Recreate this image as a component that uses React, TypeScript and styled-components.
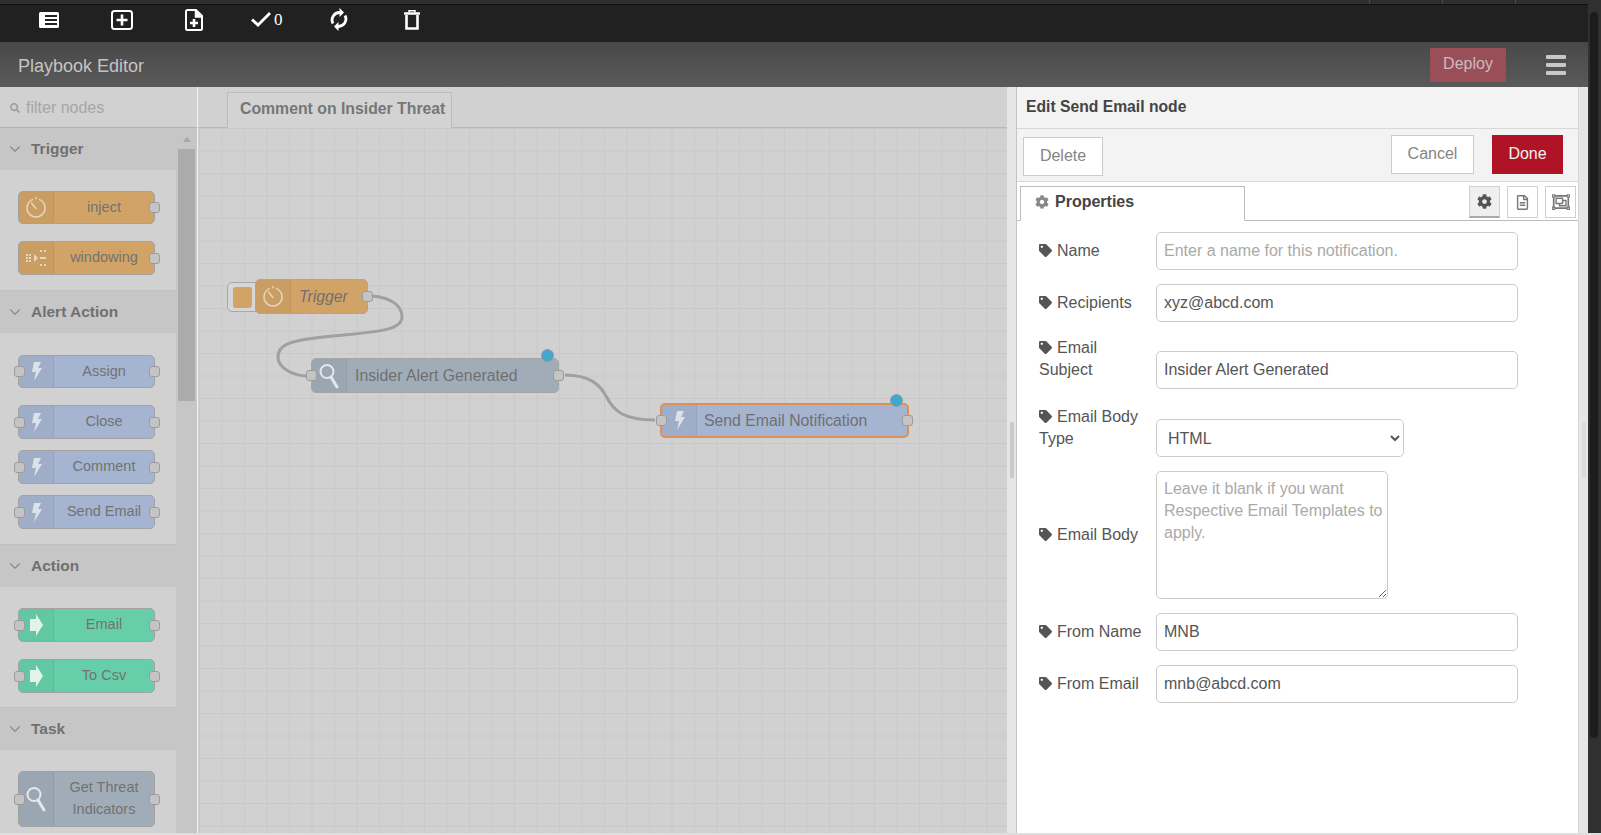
import { ReactNode } from 'react';
import styled, { createGlobalStyle } from 'styled-components';
import { ChevronDown } from 'lucide-react';
import { FaCog, FaRegFileAlt, FaRegObjectGroup, FaSearch, FaTag } from 'react-icons/fa';

const GlobalStyle = createGlobalStyle`
  html, body {
    margin: 0;
    padding: 0;
    overflow: hidden;
    font-family: "Liberation Sans", Arial, sans-serif;
    background: #dedede;
  }
  * { box-sizing: border-box; }
`;

const Page = styled.div`
  display: flex;
  width: 1601px;
  height: 835px;
`;

const Main = styled.div`
  display: flex;
  flex-direction: column;
  width: 1588px;
  height: 833px;
`;

const PageScroll = styled.div`
  width: 13px;
  height: 833px;
  background: #303030;
  padding: 12px 3px 0 2px;
`;

const PageThumb = styled.div`
  height: 726px;
  background: #1c1c1c;
  border-radius: 4px;
`;

const TopStrip = styled.div`
  display: flex;
  justify-content: flex-end;
  height: 5px;
  background: #2e2e2e;
  border-bottom: 1px solid #111;
`;

const StripTab = styled.div`
  width: 73px;
  border-left: 1px solid #4a4a4a;
`;

const ToolBar = styled.div`
  display: flex;
  align-items: center;
  height: 37px;
  padding: 0 0 8px 13px;
  background: #212121;
  color: #fff;
`;

const ToolButton = styled.div`
  display: flex;
  align-items: center;
  justify-content: center;
  gap: 3px;
  width: 72.5px;
`;

const CheckCount = styled.span`
  font-family: "Liberation Serif", serif;
  font-size: 17px;
`;

const Header = styled.div`
  display: flex;
  align-items: center;
  height: 45px;
  padding: 0 22px 0 18px;
  background: linear-gradient(#484848, #5a5a5a);
`;

const Title = styled.div`
  flex: 1;
  padding-top: 3px;
  font-size: 18px;
  color: #c4c4c4;
`;

const Deploy = styled.div`
  display: flex;
  align-items: center;
  justify-content: center;
  width: 76px;
  height: 34px;
  margin-right: 40px;
  padding-bottom: 2px;
  font-size: 16px;
  color: #c9bcbc;
  background: #9a4f58;
`;

const Burger = styled.div`
  display: flex;
  flex-direction: column;
  gap: 4px;
  width: 20px;
`;

const BurgerLine = styled.div`
  height: 4px;
  border-radius: 1px;
  background: #c8c8c8;
`;

const Workspace = styled.div`
  display: flex;
  flex: 1;
  min-height: 0;
`;

const Sidebar = styled.div`
  display: flex;
  flex: none;
  flex-direction: column;
  width: 198px;
  background: #c6c6c6;
  border-right: 1px solid #f2f2f2;
  overflow: hidden;
`;

const Filter = styled.div`
  display: flex;
  align-items: center;
  gap: 6px;
  flex: none;
  height: 41px;
  padding: 2px 0 0 10px;
  font-size: 16px;
  color: #a6a6a6;
  background: #d1d1d1;
  border-bottom: 1px solid #b3b3b3;
`;

const PaletteRow = styled.div`
  display: flex;
  flex: 1;
  min-height: 0;
`;

const Palette = styled.div`
  width: 176px;
`;

const Category = styled.div`
  display: flex;
  align-items: center;
  gap: 7px;
  height: 42px;
  padding: 0 0 1px 6px;
  font-size: 15.5px;
  font-weight: 700;
  color: #707070;
  background: #c6c6c6;
`;

const CategoryBody = styled.div<{ $bottom: number }>`
  display: flow-root;
  padding-bottom: ${(p) => p.$bottom}px;
  background: #d1d1d1;
  border-bottom: 1px solid #c0c0c0;
`;

const PaletteTrack = styled.div`
  display: flex;
  flex-direction: column;
  align-items: center;
  width: 19px;
  padding: 9px 0 0 2px;
`;

const UpArrow = styled.div`
  width: 0;
  height: 0;
  margin-bottom: 7px;
  border-left: 4.5px solid transparent;
  border-right: 4.5px solid transparent;
  border-bottom: 5px solid #a6a6a6;
`;

const PaletteThumb = styled.div`
  width: 17px;
  height: 252px;
  background: #ababab;
`;

const PaletteNode = styled.div<{ $bg: string; $h: number; $gap: number }>`
  position: relative;
  display: flex;
  width: 137px;
  height: ${(p) => p.$h}px;
  margin: ${(p) => p.$gap}px 0 0 18px;
  background: ${(p) => p.$bg};
  border: 1px solid #a2a2a2;
  border-radius: 5px;
`;

const NodeIcon = styled.div`
  display: flex;
  flex: none;
  align-items: center;
  justify-content: center;
  width: 35px;
  background: rgba(0, 0, 0, 0.035);
  border-right: 1px solid rgba(0, 0, 0, 0.06);
  border-radius: 4px 0 0 4px;
`;

const PaletteLabel = styled.div`
  flex: 1;
  align-self: center;
  padding: 0 4px 2px;
  font-size: 14.5px;
  line-height: 22px;
  text-align: center;
  color: #727272;
`;

const Port = styled.div<{ $side: 'left' | 'right'; $off?: number }>`
  position: absolute;
  top: 50%;
  ${(p) => p.$side}: ${(p) => p.$off ?? -6}px;
  width: 11px;
  height: 11px;
  margin-top: -5.5px;
  background: #c4c4c4;
  border: 1px solid #9c9c9c;
  border-radius: 3px;
`;

const Canvas = styled.div`
  display: flex;
  flex-direction: column;
  flex: 1;
  min-width: 0;
  background: #d1d1d1;
`;

const TabBar = styled.div`
  flex: none;
  height: 41px;
  padding: 5px 0 0 29px;
  border-bottom: 1px solid #b8b8b8;
`;

const FlowTab = styled.div`
  display: flex;
  align-items: center;
  width: 225px;
  height: 36px;
  padding: 0 0 3px 12px;
  font-size: 15.8px;
  font-weight: 700;
  color: #767676;
  white-space: nowrap;
  background: #d3d3d3;
  border: 1px solid #bcbcbc;
  border-bottom: none;
`;

const Grid = styled.div`
  position: relative;
  flex: 1;
  overflow: hidden;
  background-image: linear-gradient(to right, #c9c9c9 1px, transparent 1px),
    linear-gradient(to bottom, #c9c9c9 1px, transparent 1px);
  background-size: 22.5px 22.5px;
  background-position: 1px 0;
`;

const Wires = styled.svg`
  position: absolute;
  left: 0;
  top: 0;
  width: 100%;
  height: 100%;
`;

const FlowNode = styled.div<{ $x: number; $y: number; $w: number; $bg: string; $selected?: boolean }>`
  position: absolute;
  left: ${(p) => p.$x - 198}px;
  top: ${(p) => p.$y - 128}px;
  display: flex;
  width: ${(p) => p.$w}px;
  height: 35px;
  background: ${(p) => p.$bg};
  border: ${(p) => (p.$selected ? '2px solid #dd9155' : '1px solid #a6a6a6')};
  border-radius: 5px;
`;

const FlowLabel = styled.div<{ $italic?: boolean; $pad: number }>`
  flex: 1;
  align-self: center;
  padding-left: ${(p) => p.$pad}px;
  font-size: 15.8px;
  font-style: ${(p) => (p.$italic ? 'italic' : 'normal')};
  color: #707070;
  white-space: nowrap;
`;

const InjectButton = styled.div`
  position: absolute;
  left: 29px;
  top: 154px;
  display: flex;
  align-items: center;
  width: 34px;
  height: 30px;
  padding-left: 5px;
  background: #d6d6d6;
  border: 1px solid #a8a8a8;
  border-radius: 5px;
`;

const InjectFace = styled.div`
  width: 19px;
  height: 21px;
  background: #d2a366;
  border-radius: 3px;
`;

const Badge = styled.div<{ $x: number; $y: number }>`
  position: absolute;
  left: ${(p) => p.$x - 198}px;
  top: ${(p) => p.$y - 128}px;
  width: 13px;
  height: 13px;
  background: #3fa9cf;
  border: 1px solid #8f9ca3;
  border-radius: 50%;
`;

const Gutter = styled.div`
  display: flex;
  flex: none;
  align-items: center;
  justify-content: center;
  width: 9px;
  background: #e6e6e6;
`;

const Grip = styled.div<{ $tone: string }>`
  width: 4px;
  height: 56px;
  margin-bottom: 20px;
  background: ${(p) => p.$tone};
`;

const Editor = styled.div`
  display: flex;
  flex: none;
  flex-direction: column;
  width: 563px;
  background: #fff;
  border-left: 1px solid #c4c4c4;
  border-right: 1px solid #d8d8d8;
`;

const EditorTitle = styled.div`
  display: flex;
  align-items: center;
  flex: none;
  height: 42px;
  padding: 0 0 2px 9px;
  font-size: 15.7px;
  font-weight: 700;
  color: #444;
  background: #f3f3f3;
  border-bottom: 1px solid #d8d8d8;
`;

const EditorActions = styled.div`
  display: flex;
  align-items: flex-start;
  flex: none;
  gap: 18px;
  height: 53px;
  padding: 6px 15px 0 6px;
  background: #f3f3f3;
  border-bottom: 1px solid #d8d8d8;
`;

const ActionButton = styled.div<{ $primary?: boolean; $w: number; $push?: boolean; $drop?: number }>`
  display: flex;
  align-items: center;
  justify-content: center;
  width: ${(p) => p.$w}px;
  height: 39px;
  margin-top: ${(p) => p.$drop || 0}px;
  margin-left: ${(p) => (p.$push ? 'auto' : '0')};
  padding-bottom: 2px;
  font-size: 16px;
  color: ${(p) => (p.$primary ? '#f2f2f2' : '#858585')};
  background: ${(p) => (p.$primary ? '#ae1426' : '#fff')};
  border: 1px solid ${(p) => (p.$primary ? '#ae1426' : '#ccc')};
`;

const TabRow = styled.div`
  display: flex;
  flex: none;
  align-items: flex-start;
  gap: 7px;
  height: 39px;
  padding: 4px 2px 0 3px;
  border-bottom: 1px solid #bcbcbc;
`;

const PropsTab = styled.div`
  display: flex;
  align-items: center;
  gap: 6px;
  width: 225px;
  height: 35px;
  margin-right: auto;
  padding: 0 0 4px 14px;
  font-size: 16px;
  font-weight: 700;
  color: #444;
  background: #fff;
  border: 1px solid #bcbcbc;
  border-bottom: 1px solid #fff;
`;

const TabIcon = styled.div<{ $active?: boolean }>`
  display: flex;
  align-items: center;
  justify-content: center;
  width: 31px;
  height: 32px;
  color: ${(p) => (p.$active ? '#555' : '#777')};
  background: ${(p) => (p.$active ? '#efefef' : '#fff')};
  border: 1px solid #d0d0d0;
  border-bottom: ${(p) => (p.$active ? '2px solid #aaa' : '1px solid #d0d0d0')};
`;

const Form = styled.div`
  display: flex;
  flex-direction: column;
  gap: 13.5px;
  padding: 11px 0 0 22px;
`;

const Row = styled.div<{ $center?: boolean; $extra?: number }>`
  display: flex;
  align-items: ${(p) => (p.$center ? 'center' : 'last baseline')};
  margin-top: ${(p) => p.$extra || 0}px;
`;

const Label = styled.label`
  flex: none;
  width: 114px;
  margin-right: 3px;
  font-size: 16px;
  line-height: 22px;
  color: #555;
  svg {
    margin-right: 5px;
    vertical-align: -1px;
  }
`;

const Field = styled.input`
  width: 362px;
  height: 38px;
  padding: 0 7px;
  font-family: inherit;
  font-size: 16px;
  color: #555;
  background: #fff;
  border: 1px solid #ccc;
  border-radius: 5px;
  &::placeholder {
    color: #aaa;
    opacity: 1;
  }
`;

const Picker = styled.select`
  width: 248px;
  height: 38px;
  padding: 0 7px;
  font-family: inherit;
  font-size: 16px;
  color: #555;
  background: #fff;
  border: 1px solid #ccc;
  border-radius: 5px;
`;

const BodyArea = styled.textarea`
  width: 232px;
  height: 128px;
  padding: 6px 3px 6px 7px;
  font-family: inherit;
  font-size: 16px;
  line-height: 22px;
  color: #555;
  background: #fff;
  border: 1px solid #ccc;
  border-radius: 5px;
  &::placeholder {
    color: #aaa;
    opacity: 1;
  }
`;

const Clock = () => (
  <svg width="22" height="23" viewBox="0 0 22 23" fill="none" stroke="#e6d6bf" strokeWidth="1.5">
    <path d="M8 3.400A9 9 0 1 0 14 3.400" />
    <path d="M11 1.500v1.200M11 12.500 6.500 7" strokeLinecap="round" />
  </svg>
);

const Windowing = () => (
  <svg width="22" height="18" viewBox="0 0 22 18" fill="#e6d6bf">
    <path d="M1 5h2v2H1zM4 5h2v2H4zM1 8h2v2H1zM4 8h2v2H4zM1 11h2v2H1zM4 11h2v2H4zM9 5l4 4-4 4zM15 1h2v2h-2zM19 1h2v2h-2zM15 8h6v2h-6zM15 15h2v2h-2zM19 15h2v2h-2z" />
  </svg>
);

const Bolt = () => (
  <svg width="11" height="19" viewBox="0 0 11 19" fill="#dde2ea">
    <path d="M3 0h7L7 6h4L3 19l2-9H1z" />
  </svg>
);

const Arrow = () => (
  <svg width="13" height="22" viewBox="0 0 13 22" fill="#e2f3ec">
    <path d="M0 5h6V0l7 11-7 11v-5H0z" />
  </svg>
);

const Lens = () => (
  <svg width="20" height="26" viewBox="0 0 20 26" fill="none" stroke="#e4e8ec">
    <circle cx="8" cy="8.500" r="6.500" strokeWidth="2" />
    <path d="M12 14l6 10" strokeWidth="3" strokeLinecap="round" />
  </svg>
);

type PaletteItem = {
  label: ReactNode;
  icon: ReactNode;
  bg: string;
  h: number;
  gap: number;
  left?: boolean;
};

const BLUE = '#a5b4d0';
const ORANGE = '#d2a366';
const GREEN = '#66cfa9';
const SLATE = '#a0adb8';

const sections: { name: string; bottom: number; items: PaletteItem[] }[] = [
  {
    name: 'Trigger',
    bottom: 15,
    items: [
      { label: 'inject', icon: <Clock />, bg: ORANGE, h: 33, gap: 21 },
      { label: 'windowing', icon: <Windowing />, bg: ORANGE, h: 34, gap: 17 },
    ],
  },
  {
    name: 'Alert Action',
    bottom: 15,
    items: [
      { label: 'Assign', icon: <Bolt />, bg: BLUE, h: 33, gap: 22, left: true },
      { label: 'Close', icon: <Bolt />, bg: BLUE, h: 34, gap: 17, left: true },
      { label: 'Comment', icon: <Bolt />, bg: BLUE, h: 34, gap: 11, left: true },
      { label: 'Send Email', icon: <Bolt />, bg: BLUE, h: 34, gap: 11, left: true },
    ],
  },
  {
    name: 'Action',
    bottom: 14,
    items: [
      { label: 'Email', icon: <Arrow />, bg: GREEN, h: 34, gap: 21, left: true },
      { label: 'To Csv', icon: <Arrow />, bg: GREEN, h: 34, gap: 17, left: true },
    ],
  },
  {
    name: 'Task',
    bottom: 10,
    items: [{ label: 'Get Threat Indicators', icon: <Lens />, bg: SLATE, h: 56, gap: 21, left: true }],
  },
];

const fields = [
  { label: 'Name', placeholder: 'Enter a name for this notification.', value: '', extra: 0 },
  { label: 'Recipients', value: 'xyz@abcd.com', extra: 0 },
  { label: 'Email Subject', value: 'Insider Alert Generated', extra: 2 },
];

const App = () => {
  return (
    <Page>
      <GlobalStyle />
      <Main>
        <TopStrip>
          <StripTab />
          <StripTab />
          <StripTab />
        </TopStrip>
        <ToolBar>
          <ToolButton>
            <svg width="20" height="16" viewBox="0 0 20 16" fill="#fff">
              <path d="M1.500 0h17A1.500 1.500 0 0 1 20 1.500v13a1.500 1.500 0 0 1-1.500 1.500h-17A1.500 1.500 0 0 1 0 14.500v-13A1.500 1.500 0 0 1 1.500 0zM6 3v2h12V3zM6 7v2h12V7zM6 11v2h12v-2z" fillRule="evenodd" />
            </svg>
          </ToolButton>
          <ToolButton>
            <svg width="22" height="20" viewBox="0 0 22 20" fill="none" stroke="#fff" strokeWidth="2">
              <rect x="1" y="1" width="20" height="18" rx="2.500" />
              <path d="M11 4.500v11M5.500 10h11" strokeWidth="2.600" />
            </svg>
          </ToolButton>
          <ToolButton>
            <svg width="18" height="22" viewBox="0 0 18 22" fill="none" stroke="#fff" strokeWidth="2">
              <path d="M2.500 1H11l6 6v12.500a1.500 1.500 0 0 1-1.500 1.500h-13A1.500 1.500 0 0 1 1 19.500v-17A1.500 1.500 0 0 1 2.500 1z" />
              <path d="M10.500 1v7H17" fill="#fff" strokeWidth="1.500" />
              <path d="M9 10v8M5 14h8" strokeWidth="2.600" />
            </svg>
          </ToolButton>
          <ToolButton>
            <svg width="20" height="15" viewBox="0 0 20 15" fill="#fff">
              <path d="M0 8.500 2 6.500 7 11 18 0 20 2 7 15z" />
            </svg>
            <CheckCount>0</CheckCount>
          </ToolButton>
          <ToolButton>
            <svg width="18" height="25" viewBox="0 0 18 25" fill="none" stroke="#fff" strokeWidth="2.800">
              <path d="M10 5.500A7.500 7.500 0 0 0 3 16.500" />
              <path d="M8 19.500A7.500 7.500 0 0 0 15 8.500" />
              <path d="M9.500 1 14 5.500 9.500 10z" fill="#fff" stroke="none" />
              <path d="M8.500 15 4 19.500 8.500 24z" fill="#fff" stroke="none" />
            </svg>
          </ToolButton>
          <ToolButton>
            <svg width="16" height="20" viewBox="0 0 16 20" fill="none" stroke="#fff">
              <path d="M0 3.500h16" strokeWidth="2.500" />
              <path d="M5 2.500V.800h6v1.700" strokeWidth="1.500" />
              <path d="M2.500 5v13.500h11V5" strokeWidth="2.600" />
            </svg>
          </ToolButton>
        </ToolBar>
        <Header>
          <Title>Playbook Editor</Title>
          <Deploy>Deploy</Deploy>
          <Burger>
            <BurgerLine />
            <BurgerLine />
            <BurgerLine />
          </Burger>
        </Header>
        <Workspace>
          <Sidebar>
            <Filter>
              <FaSearch size={10} color="#9c9c9c" />
              filter nodes
            </Filter>
            <PaletteRow>
              <Palette>
                {sections.map((section) => (
                  <div key={section.name}>
                    <Category>
                      <ChevronDown size={18} strokeWidth={1.5} color="#8a8a8a" />
                      {section.name}
                    </Category>
                    <CategoryBody $bottom={section.bottom}>
                      {section.items.map((item, i) => (
                        <PaletteNode key={i} $bg={item.bg} $h={item.h} $gap={item.gap}>
                          <NodeIcon>{item.icon}</NodeIcon>
                          <PaletteLabel>{item.label}</PaletteLabel>
                          {item.left && <Port $side="left" $off={-5} />}
                          <Port $side="right" />
                        </PaletteNode>
                      ))}
                    </CategoryBody>
                  </div>
                ))}
              </Palette>
              <PaletteTrack>
                <UpArrow />
                <PaletteThumb />
              </PaletteTrack>
            </PaletteRow>
          </Sidebar>

          <Canvas>
            <TabBar>
              <FlowTab>Comment on Insider Threat</FlowTab>
            </TabBar>
            <Grid>
              <Wires>
                <g transform="translate(-198 -128)" fill="none" stroke="#a0a0a0" strokeWidth="3">
                  <path d="M373 296C392 298 402 306 402 317C402 333 365 332 315 338C290 341 278 345 278 357C278 368 292 375 306 376" />
                  <path d="M565 375C590 375 600 385 606 396C614 412 625 420 655 420" />
                </g>
              </Wires>
              <InjectButton>
                <InjectFace />
              </InjectButton>
              <FlowNode $x={255} $y={279} $w={113} $bg={ORANGE}>
                <NodeIcon>
                  <Clock />
                </NodeIcon>
                <FlowLabel $italic $pad={8}>
                  Trigger
                </FlowLabel>
                <Port $side="right" />
              </FlowNode>
              <FlowNode $x={311} $y={358} $w={248} $bg={SLATE}>
                <NodeIcon>
                  <Lens />
                </NodeIcon>
                <FlowLabel $pad={8}>Insider Alert Generated</FlowLabel>
                <Port $side="left" />
                <Port $side="right" />
              </FlowNode>
              <Badge $x={541} $y={349} />
              <FlowNode $x={660} $y={403} $w={249} $bg={BLUE} $selected>
                <NodeIcon>
                  <Bolt />
                </NodeIcon>
                <FlowLabel $pad={7}>Send Email Notification</FlowLabel>
                <Port $side="left" />
                <Port $side="right" />
              </FlowNode>
              <Badge $x={890} $y={394} />
            </Grid>
          </Canvas>

          <Gutter>
            <Grip $tone="#c9c9c9" />
          </Gutter>

          <Editor>
            <EditorTitle>Edit Send Email node</EditorTitle>
            <EditorActions>
              <ActionButton $w={80} $drop={2}>
                Delete
              </ActionButton>
              <ActionButton $w={83} $push>
                Cancel
              </ActionButton>
              <ActionButton $w={71} $primary>
                Done
              </ActionButton>
            </EditorActions>
            <TabRow>
              <PropsTab>
                <FaCog size={14} color="#888" />
                Properties
              </PropsTab>
              <TabIcon $active>
                <FaCog size={15} />
              </TabIcon>
              <TabIcon>
                <FaRegFileAlt size={15} />
              </TabIcon>
              <TabIcon>
                <FaRegObjectGroup size={18} />
              </TabIcon>
            </TabRow>
            <Form>
              {fields.map((field) => (
                <Row key={field.label} $extra={field.extra}>
                  <Label>
                    <FaTag size={13} />
                    {field.label}
                  </Label>
                  <Field readOnly placeholder={field.placeholder} value={field.value} />
                </Row>
              ))}
              <Row $extra={3}>
                <Label>
                  <FaTag size={13} />
                  Email Body Type
                </Label>
                <Picker defaultValue="HTML">
                  <option>HTML</option>
                </Picker>
              </Row>
              <Row $center>
                <Label>
                  <FaTag size={13} />
                  Email Body
                </Label>
                <BodyArea readOnly placeholder="Leave it blank if you want Respective Email Templates to apply." />
              </Row>
              <Row $extra={1}>
                <Label>
                  <FaTag size={13} />
                  From Name
                </Label>
                <Field readOnly value="MNB" />
              </Row>
              <Row>
                <Label>
                  <FaTag size={13} />
                  From Email
                </Label>
                <Field readOnly value="mnb@abcd.com" />
              </Row>
            </Form>
          </Editor>

          <Gutter>
            <Grip $tone="#dcdcdc" />
          </Gutter>
        </Workspace>
      </Main>
      <PageScroll>
        <PageThumb />
      </PageScroll>
    </Page>
  );
};

export default App;
